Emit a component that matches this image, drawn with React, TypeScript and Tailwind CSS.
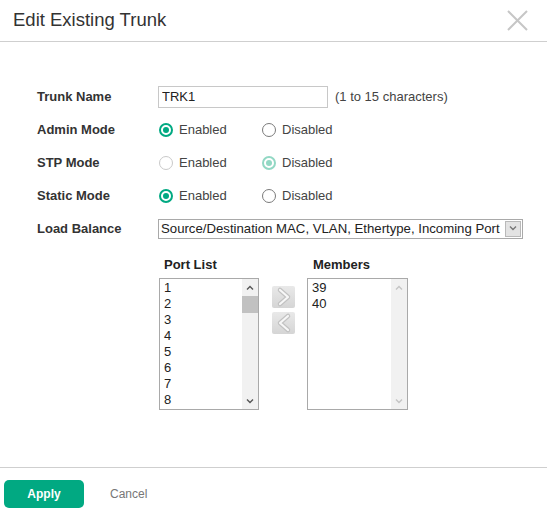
import React from 'react';

const font = "font-['Liberation_Sans',Arial,sans-serif]";

type RadioState = 'on' | 'off' | 'disabled-on' | 'disabled-off';

function Radio({ state }: { state: RadioState }) {
  const ring =
    state === 'on'
      ? 'border-[#01a982] border-2'
      : state === 'disabled-on'
      ? 'border-[#92d8c4] border-2'
      : state === 'off'
      ? 'border-[#7a7a7a] border-[1.5px]'
      : 'border-[#c9c9c9] border-[1.5px]';
  const dot = state === 'on' ? 'bg-[#01a982]' : state === 'disabled-on' ? 'bg-[#92d8c4]' : '';
  return (
    <span className={`flex items-center justify-center w-[14px] h-[14px] rounded-full bg-white ${ring}`}>
      {dot && <span className={`block w-[6px] h-[6px] rounded-full ${dot}`} />}
    </span>
  );
}

function RadioPair({ value, disabled }: { value: 'enabled' | 'disabled'; disabled?: boolean }) {
  const s = (on: boolean): RadioState =>
    disabled ? (on ? 'disabled-on' : 'disabled-off') : on ? 'on' : 'off';
  return (
    <div className="flex items-center">
      <label className="flex items-center gap-[6px] w-[104px] pl-[1px]">
        <Radio state={s(value === 'enabled')} />
        <span className="text-[13px] text-[#444]">Enabled</span>
      </label>
      <label className="flex items-center gap-[6px]">
        <Radio state={s(value === 'disabled')} />
        <span className="text-[13px] text-[#444]">Disabled</span>
      </label>
    </div>
  );
}

function Row({ label, children }: { label: string; children: React.ReactNode }) {
  return (
    <div className="flex items-center h-[33px]">
      <div className="w-[121px] text-[13px] font-bold text-[#333]">{label}</div>
      {children}
    </div>
  );
}

function Chevron({ dir, color }: { dir: 'up' | 'down'; color: string }) {
  return (
    <svg width="8" height="5" viewBox="0 0 8 5">
      <path
        d={dir === 'up' ? 'M1 4.5 L4 1.5 L7 4.5' : 'M1 0.5 L4 3.5 L7 0.5'}
        fill="none"
        stroke={color}
        strokeWidth="1.4"
      />
    </svg>
  );
}

function ListBox({ items, active }: { items: string[]; active?: boolean }) {
  const arrow = active ? '#555' : '#c4c4c4';
  return (
    <div className="flex h-[132px] border border-[#a9a9a9] bg-white">
      <div className="flex-1 pt-[1px] pl-[4px] text-[13px] leading-[16px] text-[#222]">
        {items.map((i) => (
          <div key={i}>{i}</div>
        ))}
      </div>
      <div className="flex flex-col w-[16px] bg-[#f1f1f1]">
        <div className="flex items-center justify-center h-[16px]">
          <Chevron dir="up" color={arrow} />
        </div>
        <div className="flex-1">
          {active && <div className="h-[17px] mt-[1px] bg-[#c1c1c1]" />}
        </div>
        <div className="flex items-center justify-center h-[16px]">
          <Chevron dir="down" color={arrow} />
        </div>
      </div>
    </div>
  );
}

function MoveButton({ dir }: { dir: 'right' | 'left' }) {
  const d = dir === 'right' ? 'M7 4 L15 11 L7 18' : 'M15 4 L7 11 L15 18';
  return (
    <button className="flex items-center justify-center w-[23px] h-[22px] rounded-[2px] bg-gradient-to-b from-[#e9e9e9] to-[#d5d5d5]">
      <svg width="22" height="22" viewBox="0 0 22 22">
        <path d={d} fill="none" stroke="#c2c2c2" strokeWidth="4.5" strokeLinejoin="round" strokeLinecap="round" />
        <path d={d} fill="none" stroke="#f7f7f7" strokeWidth="2.2" strokeLinejoin="round" strokeLinecap="round" />
      </svg>
    </button>
  );
}

export default function App() {
  const ports = ['1', '2', '3', '4', '5', '6', '7', '8'];
  return (
    <div className={`${font} flex flex-col w-[547px] h-[514px] bg-white text-[#333]`}>
      <div className="flex items-center justify-between h-[42px] border-b border-[#cfcfcf] pl-[13px] pr-[19px]">
        <h1 className="text-[18.5px] text-[#333] pb-[1px]">Edit Existing Trunk</h1>
        <svg width="21" height="21" viewBox="0 0 21 21">
          <path d="M1 1 L20 20 M20 1 L1 20" stroke="#c6c6c6" strokeWidth="2" />
        </svg>
      </div>

      <div className="flex-1 pt-[38px] pl-[37px]">
        <Row label="Trunk Name">
          <input
            defaultValue="TRK1"
            className="w-[170px] h-[22px] border border-[#c8c8c8] px-[3px] text-[13px] text-[#222] outline-none"
          />
          <span className="ml-[7px] text-[13px] text-[#444]">(1 to 15 characters)</span>
        </Row>
        <Row label="Admin Mode">
          <RadioPair value="enabled" />
        </Row>
        <Row label="STP Mode">
          <RadioPair value="disabled" disabled />
        </Row>
        <Row label="Static Mode">
          <RadioPair value="enabled" />
        </Row>
        <Row label="Load Balance">
          <div className="flex items-center w-[365px] h-[20px] border border-[#a9a9a9] pl-[2px] pr-[1px]">
            <span className="flex-1 text-[13.2px] text-[#222] whitespace-nowrap">
              Source/Destination MAC, VLAN, Ethertype, Incoming Port
            </span>
            <span className="flex items-center justify-center w-[16px] h-[16px] border border-[#b9b9b9] bg-[#e3e3e3]">
              <Chevron dir="down" color="#777" />
            </span>
          </div>
        </Row>

        <div className="flex mt-[10px] pl-[122px]">
          <div className="w-[100px]">
            <div className="h-[18px] pl-[5px] text-[13px] font-bold text-[#222]">Port List</div>
            <div className="mt-[5px]">
              <ListBox items={ports} active />
            </div>
          </div>
          <div className="flex flex-col gap-[4px] ml-[13px] mt-[31px]">
            <MoveButton dir="right" />
            <MoveButton dir="left" />
          </div>
          <div className="w-[101px] ml-[12px]">
            <div className="h-[18px] pl-[6px] text-[13px] font-bold text-[#222]">Members</div>
            <div className="mt-[5px]">
              <ListBox items={['39', '40']} />
            </div>
          </div>
        </div>
      </div>

      <div className="flex items-start h-[47px] border-t border-[#cfcfcf] pt-[12px] pl-[4px]">
        <button className="w-[80px] h-[28px] rounded-[5px] bg-[#01a982] text-[12px] font-bold text-white">
          Apply
        </button>
        <button className="ml-[26px] h-[28px] text-[12px] text-[#777]">Cancel</button>
      </div>
    </div>
  );
}
